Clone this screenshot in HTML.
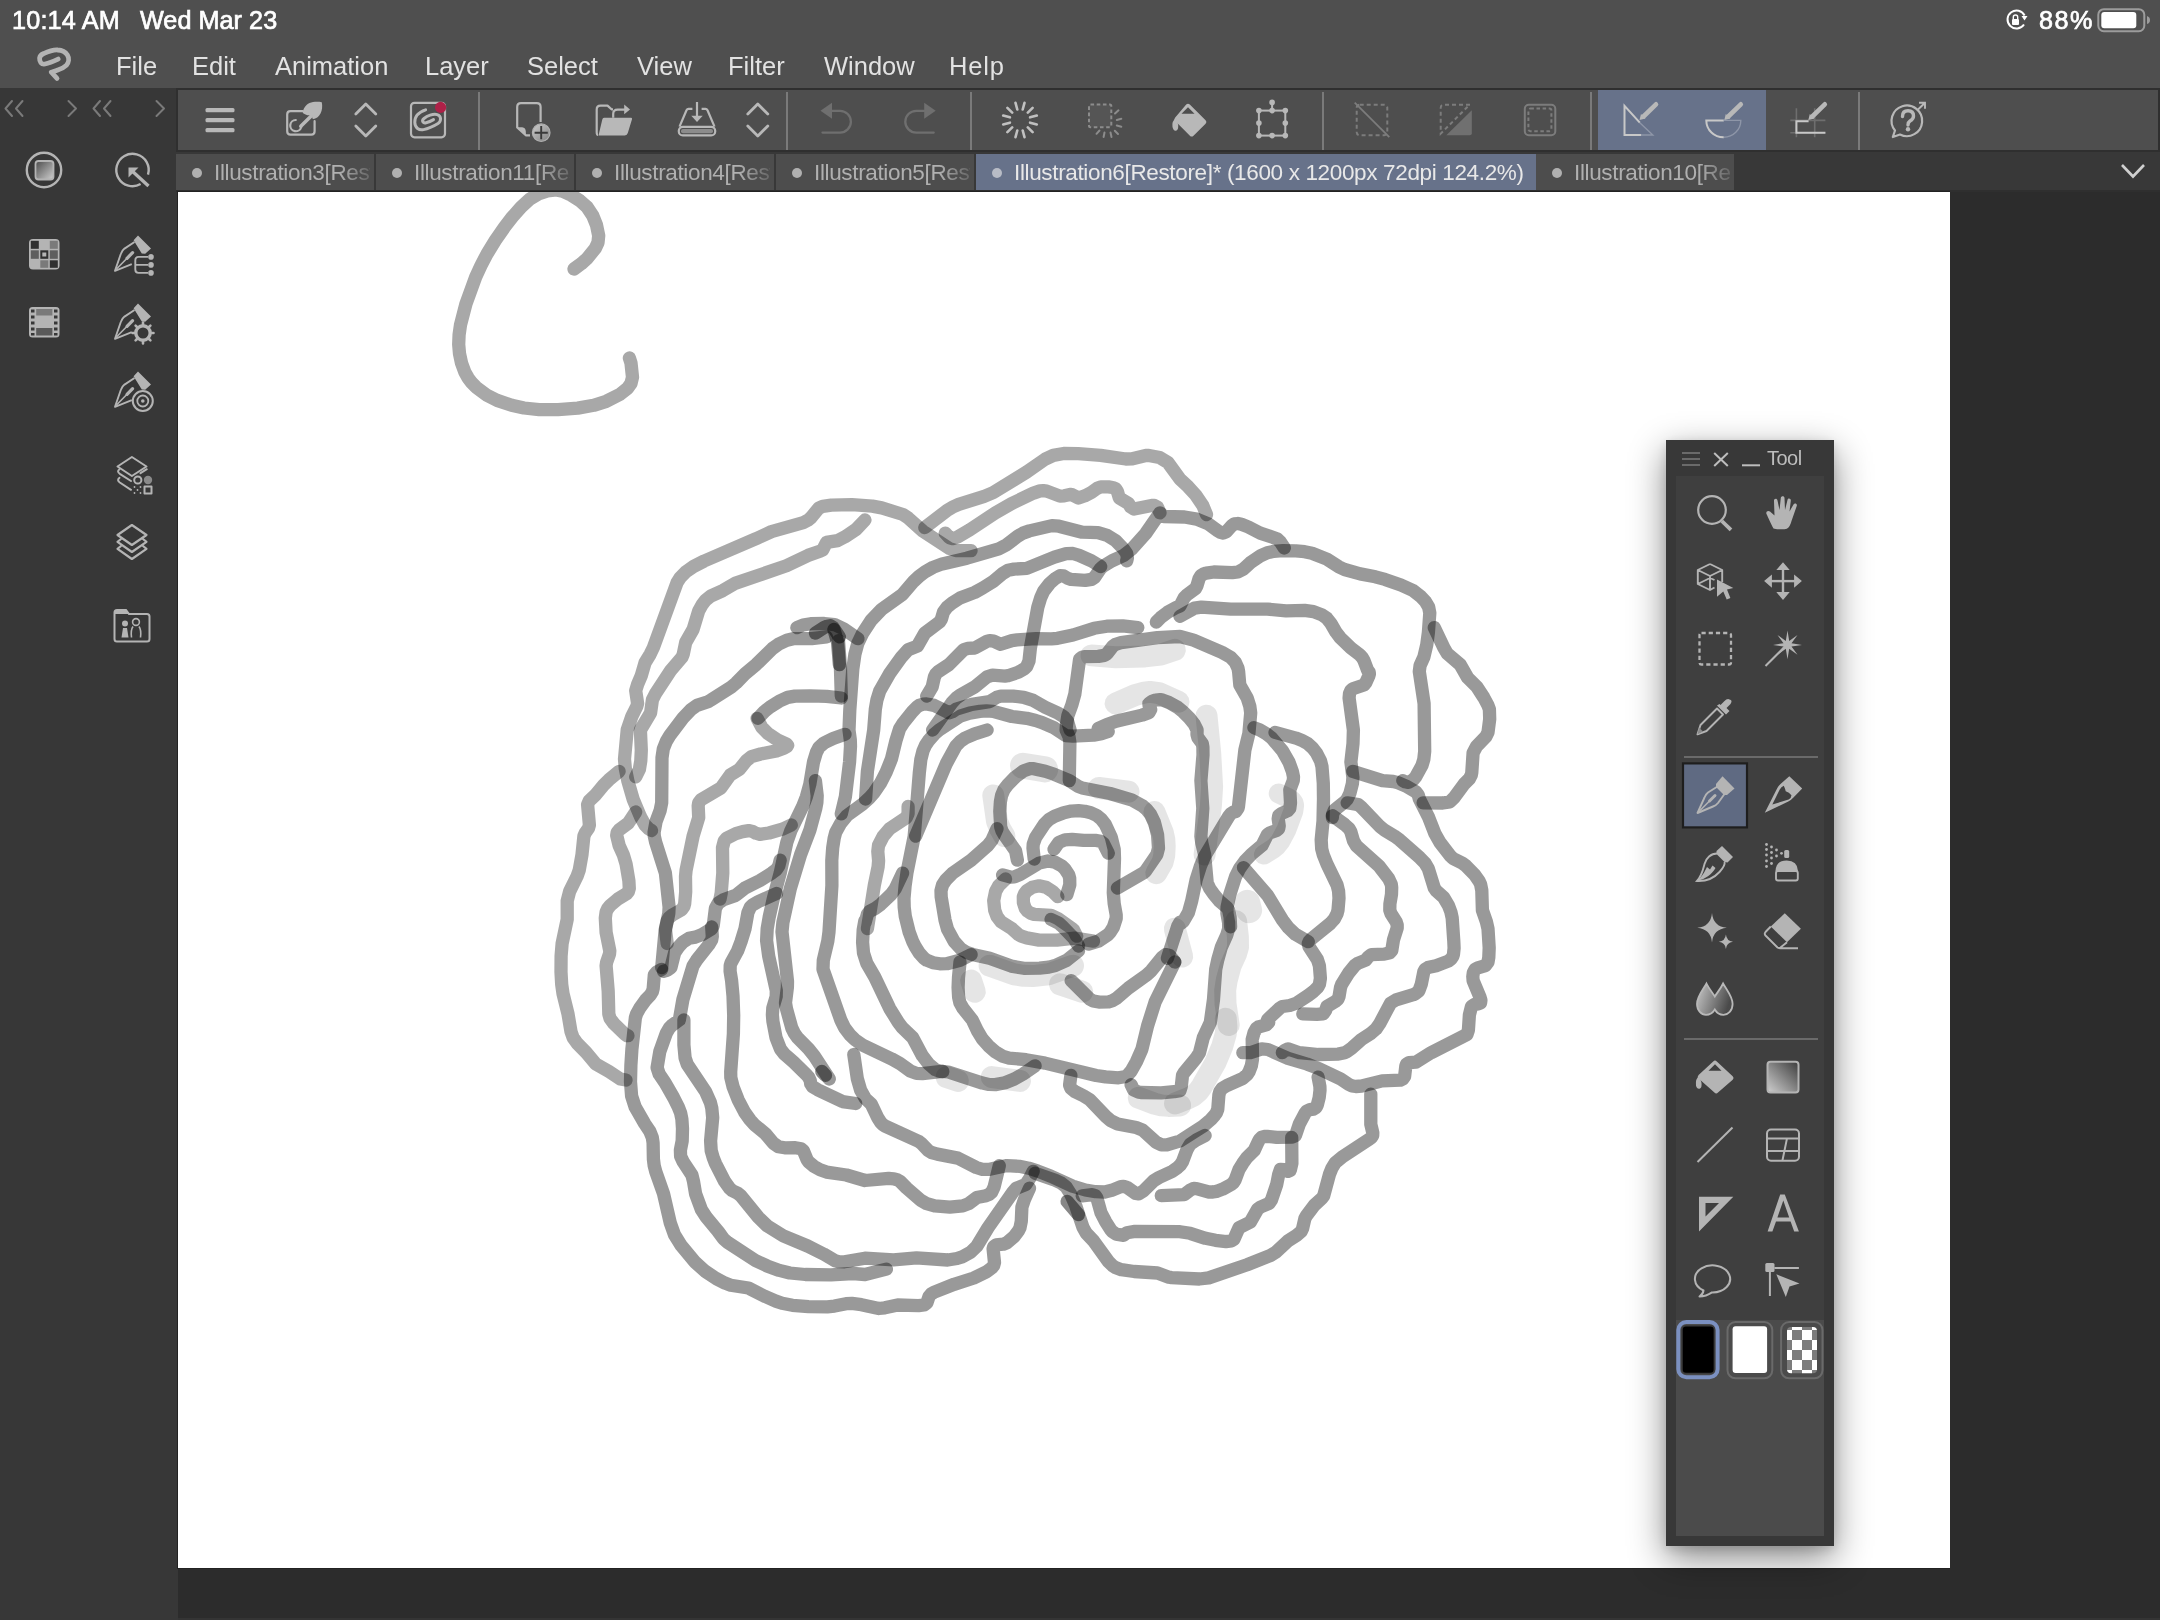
<!DOCTYPE html>
<html><head><meta charset="utf-8">
<style>
*{margin:0;padding:0;box-sizing:border-box}
html,body{width:2160px;height:1620px;overflow:hidden;background:#2c2c2c;font-family:"Liberation Sans",sans-serif}
.a{position:absolute}
.st,.menu,.tab .t,#ptitle{will-change:transform}
#top{left:0;top:0;width:2160px;height:88px;background:#4f4f4f}
.st{top:6px;color:#fff;font-size:25.2px;white-space:pre;-webkit-text-stroke:0.7px #fff;letter-spacing:0.2px}
.menu{top:51.5px;color:#e2e2e2;font-size:25.5px}
#side{left:0;top:88px;width:178px;height:1532px;background:#373737}
#tbwrap{left:176px;top:88px;width:1984px;height:104px;background:#2f2f2f}
#toolbar{left:178px;top:90px;width:1980px;height:60px;background:#4e4e4e}
#hl{left:1598px;top:90px;width:168px;height:60px;background:#67728a}
#tabstrip{left:176px;top:152px;width:1984px;height:38px;background:#383838}
.tab{top:154px;height:36px;width:198px;background:#4d4d4d;overflow:hidden}
.tab .dot{position:absolute;left:16px;top:14px;width:10px;height:10px;border-radius:50%;background:#b0b0b0}
.tab .t{position:absolute;left:37.5px;top:6px;font-size:22.5px;letter-spacing:-0.35px;color:#b0b0b0;white-space:nowrap;width:156px;overflow:hidden;
  -webkit-mask-image:linear-gradient(to right,#000 80%,rgba(0,0,0,0.25) 100%)}
.tab.act{background:#67728a;width:560px}
.tab.act .t{color:#e8e8e8;-webkit-mask-image:none;width:520px}
.tab.act .dot{background:#b8bcc6}
#canvas{left:178px;top:192px;width:1772px;height:1376px;background:#fff}
#cvline{left:177px;top:191px;width:1773px;height:1378px;background:#222}
#bstrip{left:178px;top:1618px;width:1982px;height:2px;background:#343434}
#panel{left:1666px;top:440px;width:168px;height:1106px;background:#383838;box-shadow:0 12px 34px rgba(0,0,0,0.48),0 3px 10px rgba(0,0,0,0.12)}
#pinner{left:1676px;top:476px;width:148px;height:844px;background:#3f3f3f}
#pcolor{left:1676px;top:1320px;width:148px;height:216px;background:#4b4b4b}
#ptitle{left:1766.5px;top:447px;color:#bdbdbd;font-size:20px;letter-spacing:-0.5px}
svg.ov{position:absolute;left:0;top:0}
</style></head><body>
<div id="top" class="a"></div>
<div class="a st" style="left:11.5px;letter-spacing:0.2px">10:14 AM</div>
<div class="a st" style="left:140px;letter-spacing:0.05px">Wed Mar 23</div>
<div class="a st" style="left:2038.5px;letter-spacing:1.5px">88%</div>
<div class="a menu" style="left:115.5px">File</div>
<div class="a menu" style="left:191.5px">Edit</div>
<div class="a menu" style="left:274.5px">Animation</div>
<div class="a menu" style="left:425px">Layer</div>
<div class="a menu" style="left:527px">Select</div>
<div class="a menu" style="left:637px">View</div>
<div class="a menu" style="left:727.5px">Filter</div>
<div class="a menu" style="left:823.5px">Window</div>
<div class="a menu" style="left:949px;letter-spacing:0.8px">Help</div>

<div id="side" class="a"></div>
<div id="tbwrap" class="a"></div>
<div id="toolbar" class="a"></div>
<div id="hl" class="a"></div>
<div id="tabstrip" class="a"></div>
<div class="a tab" style="left:176px"><div class="dot"></div><div class="t">Illustration3[Restore]</div></div>
<div class="a tab" style="left:376px"><div class="dot"></div><div class="t">Illustration11[Restore]</div></div>
<div class="a tab" style="left:576px"><div class="dot"></div><div class="t">Illustration4[Restore]</div></div>
<div class="a tab" style="left:776px"><div class="dot"></div><div class="t">Illustration5[Restore]</div></div>
<div class="a tab act" style="left:976px"><div class="dot"></div><div class="t">Illustration6[Restore]* (1600 x 1200px 72dpi 124.2%)</div></div>
<div class="a tab" style="left:1536px"><div class="dot"></div><div class="t">Illustration10[Restore]</div></div>

<div id="cvline" class="a"></div>
<div id="bstrip" class="a"></div>
<div id="canvas" class="a"></div>
<svg width="2160" height="1620" viewBox="0 0 2160 1620" style="left:0;top:0;position:absolute">
<defs><clipPath id="cv"><rect x="178" y="192" width="1772" height="1376"/></clipPath></defs>
<g clip-path="url(#cv)" fill="none" stroke-linecap="round" stroke-linejoin="round">
<path d="M574.0,269.0 581.3,263.7 587.0,258.6 595.3,248.3 598.0,242.6 598.7,235.7 596.5,225.0 592.8,215.7 587.0,207.0 579.8,200.6 571.5,195.3 562.7,191.2 556.5,189.9 547.4,190.9 538.2,194.0 529.8,199.2 521.1,207.1 512.2,217.2 504.6,227.0 495.4,240.3 487.0,254.0 481.0,265.5 475.7,277.0 465.9,304.0 460.5,324.9 459.1,334.8 458.7,344.5 459.5,353.6 461.5,363.0 464.9,372.3 468.1,377.9 471.9,382.9 476.1,387.2 486.2,394.8 497.1,400.4 511.6,405.3 524.0,408.0 539.1,409.6 558.0,409.6 577.8,408.1 593.7,405.3 606.3,401.3 619.9,394.4 627.6,388.3 631.0,383.4 632.5,377.2 631.0,363.0 629.4,358.0" stroke="#a8a8a8" stroke-width="13.3"/>
<path d="M1206.5,715.7 1210.2,752.8 1212.1,786.7 1210.9,805.7 1204.6,854.6" stroke="#000" stroke-opacity="0.1" stroke-width="22"/>
<path d="M1278.7,793.5 1288.2,798.0 1291.5,800.2 1293.5,802.8 1294.1,805.3 1293.3,811.2 1286.4,829.8 1280.3,841.2 1276.3,846.1 1273.5,848.5 1263.9,854.6" stroke="#000" stroke-opacity="0.1" stroke-width="20"/>
<path d="M1247.2,902.8 1249.1,910.2" stroke="#000" stroke-opacity="0.1" stroke-width="26"/>
<path d="M1236.1,921.3 1237.9,936.9 1238.0,947.2 1236.1,953.6 1230.6,965.7 1226.7,980.4 1225.2,990.2 1225.5,1003.7 1228.7,1025.0" stroke="#000" stroke-opacity="0.1" stroke-width="22"/>
<path d="M1225.8,1018.8 1226.4,1026.5 1225.8,1033.8 1222.2,1046.5 1215.4,1062.6 1201.9,1086.3 1198.1,1091.7 1193.1,1095.9 1186.4,1099.1 1175.0,1103.5" stroke="#000" stroke-opacity="0.1" stroke-width="22"/>
<path d="M1091.5,655.4 1115.6,657.2 1145.0,656.4 1160.7,654.6 1174.8,649.8" stroke="#000" stroke-opacity="0.1" stroke-width="22"/>
<path d="M1115.6,703.5 1135.0,695.1 1144.1,692.7 1150.0,691.9 1159.0,693.1 1178.5,701.7" stroke="#000" stroke-opacity="0.1" stroke-width="22"/>
<path d="M1154.4,812.0 1162.9,833.0 1164.3,839.4 1164.7,846.2 1164.2,855.6 1162.6,862.0 1156.3,873.1" stroke="#000" stroke-opacity="0.1" stroke-width="22"/>
<path d="M1023.0,765.7 1045.2,769.4" stroke="#000" stroke-opacity="0.1" stroke-width="26"/>
<path d="M1098.9,788.0 1128.5,791.7" stroke="#000" stroke-opacity="0.1" stroke-width="22"/>
<path d="M989.6,965.7 1014.2,974.3 1023.6,975.8 1032.8,976.1 1048.4,974.3 1073.0,965.7" stroke="#000" stroke-opacity="0.1" stroke-width="22"/>
<path d="M1060.0,984.3 1082.2,991.7" stroke="#000" stroke-opacity="0.1" stroke-width="22"/>
<path d="M1174.8,928.7 1182.2,956.5" stroke="#000" stroke-opacity="0.1" stroke-width="22"/>
<path d="M971.1,980.6 974.8,991.7" stroke="#000" stroke-opacity="0.1" stroke-width="22"/>
<path d="M993.3,795.4 997.0,821.3 1000.1,828.7 1004.4,836.1" stroke="#000" stroke-opacity="0.1" stroke-width="22"/>
<path d="M1138.7,1097.8 1154.4,1103.6 1161.3,1105.4 1168.5,1105.9 1180.1,1105.4" stroke="#000" stroke-opacity="0.1" stroke-width="22"/>
<path d="M946.6,1077.1 957.9,1080.9" stroke="#000" stroke-opacity="0.1" stroke-width="22"/>
<path d="M991.8,1077.1 1020.0,1080.9" stroke="#000" stroke-opacity="0.1" stroke-width="22"/>
<path d="M971.1,550.7 955.7,550.5 949.4,548.5 923.0,531.3 908.3,518.1 903.0,514.5 881.7,507.9 872.3,506.1 852.0,504.6 831.3,505.1 822.8,506.3 818.9,508.1 810.7,517.9 808.0,520.2 803.3,522.6 771.4,531.6 756.1,538.7 704.2,561.0 693.5,566.5 685.8,571.9 680.2,577.6 677.1,582.5 653.4,647.5 650.2,654.2 645.0,662.8 641.3,675.7 637.5,684.7 635.7,690.6 637.6,703.5 636.7,706.6 631.8,716.5 627.2,730.0 624.5,759.0 625.3,768.4 627.9,781.1 633.2,799.4 640.6,817.0 645.0,825.0 648.7,828.7 651.5,830.6" stroke="#000" stroke-opacity="0.34" stroke-width="13.3"/>
<path d="M865.0,520.0 856.1,529.4 845.2,536.7 837.6,540.6 826.5,542.4 822.8,549.8 820.6,551.0 808.0,555.4 786.4,565.8 735.7,583.1 722.8,590.6 710.6,596.1 705.7,600.1 701.9,605.1 698.7,610.9 693.1,629.4 685.7,642.4 683.2,654.3 682.0,657.2 670.9,670.2 655.5,693.6 652.4,699.8 650.6,712.8 640.4,730.0 641.3,750.1 640.8,760.7 639.4,769.4 635.7,776.9" stroke="#000" stroke-opacity="0.34" stroke-width="13.3"/>
<path d="M796.9,627.6 803.0,625.0 810.7,623.7 824.3,623.5 834.5,624.6 843.9,629.1 858.0,638.7" stroke="#000" stroke-opacity="0.40" stroke-width="13.3"/>
<path d="M815.4,633.1 823.9,627.7 827.3,626.2 830.2,625.7 833.1,627.5 839.4,636.9" stroke="#000" stroke-opacity="0.47" stroke-width="13.3"/>
<path d="M833.9,629.4 837.6,642.4 839.4,664.6" stroke="#000" stroke-opacity="0.47" stroke-width="13.3"/>
<path d="M838.5,640.6 840.4,666.5 841.3,696.1" stroke="#000" stroke-opacity="0.40" stroke-width="13.3"/>
<path d="M1126.7,560.9 1127.4,558.0 1126.7,553.5 1123.2,548.5 1115.6,540.6 1107.1,535.4 1098.0,532.7 1082.2,532.2 1058.9,526.2 1051.9,525.6 1029.4,530.9 1023.0,533.1 1017.3,536.5 1006.9,544.6 998.8,548.8 966.9,558.2 942.2,563.9 932.9,567.4 924.8,572.0 919.0,576.3 913.7,581.3 902.6,594.3 881.6,609.3 871.1,620.3 862.6,633.3 857.7,643.7 854.9,654.4 852.8,669.1 849.8,709.9 849.0,730.0 850.3,739.9 850.5,746.2 849.6,761.7 845.4,796.6 841.3,813.9" stroke="#000" stroke-opacity="0.40" stroke-width="13.3"/>
<path d="M826.5,636.9 811.7,638.7 793.1,638.7 786.8,640.3 778.3,644.3 772.5,648.5 756.1,664.6 745.0,673.9 736.1,683.0 731.2,687.1 710.7,700.1 708.0,701.7 696.9,705.4 690.6,709.9 683.0,718.1 669.8,735.6 666.5,740.9 663.3,748.9 662.0,757.7 661.7,802.8 660.1,810.7 656.1,821.3 654.1,832.2 654.3,836.1 655.6,842.0 665.4,873.1 669.1,907.1 668.8,913.3 665.0,931.8 661.7,967.6" stroke="#000" stroke-opacity="0.40" stroke-width="13.3"/>
<path d="M841.3,698.0 826.6,696.3 810.3,695.8 795.0,696.1 787.7,697.4 779.1,701.3 769.9,707.1 764.3,711.6 758.0,718.3" stroke="#000" stroke-opacity="0.40" stroke-width="13.3"/>
<path d="M757.1,718.3 762.0,727.6 767.9,733.4 777.2,739.8 786.5,744.1 787.6,745.4 786.6,746.8 783.9,748.3 776.5,750.9 760.6,754.0 751.4,756.6 746.4,760.7 739.4,769.4 730.2,775.0 720.9,788.0 701.0,799.8 698.7,802.8 698.2,805.9 698.7,817.6 693.1,836.1 686.1,870.1 685.5,876.3 685.7,891.7 684.7,903.5 683.9,906.5 681.6,909.8 671.9,915.3 669.1,917.6 667.2,920.7 665.4,928.7 667.2,943.5" stroke="#000" stroke-opacity="0.34" stroke-width="13.3"/>
<path d="M924.8,527.6 946.7,510.7 952.2,507.3 958.7,504.4 984.2,496.3 993.1,492.7 1026.7,472.0 1045.2,459.1 1053.3,455.4 1063.7,453.5 1078.3,453.7 1100.7,455.4 1125.8,459.0 1132.4,458.8 1145.8,455.5 1148.9,455.4 1159.6,457.6 1167.9,462.5 1180.0,479.2 1188.1,486.7 1196.0,495.4 1202.8,505.4 1206.5,514.6" stroke="#000" stroke-opacity="0.34" stroke-width="13.3"/>
<path d="M945.2,533.1 949.3,537.6 952.6,538.7 957.6,537.0 969.9,529.8 995.2,513.0 1011.3,503.7 1033.5,493.1 1040.0,490.9 1043.3,490.6 1046.8,491.1 1060.0,496.1 1064.3,495.8 1071.1,494.3 1078.5,498.0 1084.9,495.8 1091.5,492.4 1097.4,488.2 1100.7,486.9 1108.5,486.9 1112.5,487.5 1115.6,488.7 1117.4,491.4 1119.3,498.0 1128.5,503.5 1130.6,506.9 1134.1,509.1 1151.7,505.5 1154.4,505.4 1157.6,507.3 1160.0,512.8" stroke="#000" stroke-opacity="0.34" stroke-width="13.3"/>
<path d="M1284.3,548.0 1280.3,541.9 1276.9,538.7 1260.2,533.1 1248.1,526.9 1241.4,524.3 1237.8,523.5 1234.3,523.9 1231.6,525.9 1226.2,531.9 1223.1,533.1 1220.4,532.4 1217.5,530.6 1208.3,523.9 1196.7,519.1 1184.5,517.0 1163.7,516.5 1160.0,512.8 1145.6,533.6 1131.7,549.1 1123.6,555.5 1111.9,560.9 1103.3,566.2 1100.7,568.3 1094.5,577.4 1091.5,579.4 1085.2,580.4 1071.1,579.4 1066.9,577.9 1063.6,575.9 1060.0,575.7 1055.1,578.6 1049.7,583.4 1043.5,591.4 1040.8,597.4 1037.8,607.2 1030.4,648.0 1029.0,661.0 1026.7,666.5 1024.4,668.7 1018.3,672.3 1008.1,675.7 1005.0,676.1 992.5,675.2 987.0,676.9 974.8,686.9 961.2,694.5 956.3,698.0 952.0,702.6 932.6,730.0" stroke="#000" stroke-opacity="0.40" stroke-width="13.3"/>
<path d="M1100.7,566.5 1091.5,560.9 1079.1,555.4 1073.0,553.5 1066.2,553.6 1054.4,557.2 1026.7,568.3 1014.0,569.1 1008.1,570.2 1003.1,573.2 993.3,581.3 982.7,588.0 974.8,592.4 960.0,598.0 952.0,603.1 947.1,607.1 943.4,612.2 941.5,618.9 939.6,622.0 924.8,633.1 917.4,646.1 908.1,649.8 901.6,656.9 889.4,673.9 879.7,691.1 876.9,700.0 875.3,709.4 873.7,730.0 867.4,771.3 865.6,799.1" stroke="#000" stroke-opacity="0.40" stroke-width="13.3"/>
<path d="M1137.8,627.6 1122.8,625.9 1106.9,626.2 1094.1,628.3 1073.0,635.0 1057.5,638.3 1051.4,638.9 1035.9,638.7 1017.1,639.9 1011.9,640.6 1000.7,644.3 993.6,641.2 989.6,640.6 986.8,641.4 974.8,648.0 967.5,648.4 963.7,649.8 948.9,664.6 937.9,671.9 935.9,673.9 934.4,677.0 932.2,686.9 926.7,696.1" stroke="#000" stroke-opacity="0.40" stroke-width="13.3"/>
<path d="M1167.4,958.3 1177.7,926.3 1180.0,922.1 1180.1,923.9 1183.3,921.5 1188.4,912.7 1191.7,900.9 1196.2,879.4 1200.4,866.2 1204.2,857.1 1228.8,816.3 1230.6,813.9 1233.3,812.2 1235.8,811.5 1238.0,808.3 1238.5,806.3 1244.9,749.8 1248.9,733.4 1250.7,712.8 1249.8,706.2 1247.2,698.0 1239.8,685.0 1238.6,671.4 1238.0,668.3 1235.3,662.3 1230.6,657.2 1222.0,652.4 1193.5,640.2 1180.0,636.5 1157.4,637.7 1121.0,642.7 1115.6,644.3 1112.8,646.2 1107.2,653.6 1104.4,655.4 1098.4,656.4 1084.5,656.6 1082.2,657.2 1079.6,659.1 1074.8,694.3 1071.9,704.8 1067.9,715.6 1066.4,725.1 1066.1,730.0 1069.0,736.4 1069.9,742.6 1069.3,780.6" stroke="#000" stroke-opacity="0.40" stroke-width="13.3"/>
<path d="M1156.3,622.0 1160.7,617.6 1167.4,612.4 1175.7,607.7 1180.0,606.1 1184.3,597.6 1186.8,595.0 1195.4,588.7 1197.0,585.6 1199.1,578.5 1200.9,575.7 1203.4,574.1 1206.2,573.1 1213.9,572.0 1232.3,572.7 1238.0,572.0 1243.4,569.1 1250.2,562.8 1260.9,555.6 1267.3,552.7 1273.8,551.3 1282.8,550.7 1295.9,550.9 1304.6,551.7 1312.0,553.2 1326.9,559.1 1338.6,566.7 1344.5,569.5 1360.2,573.9 1375.4,576.8 1385.0,579.4 1400.9,585.0 1413.0,590.5 1420.7,596.5 1425.4,601.5 1428.7,607.2 1429.8,613.0 1428.4,632.4 1426.7,645.1 1423.9,657.0 1420.1,665.4 1419.3,671.5 1424.1,703.5 1424.7,751.2 1423.8,759.4 1422.0,765.4 1415.7,776.9 1413.2,779.7 1408.3,782.4 1405.1,781.8 1402.8,780.6" stroke="#000" stroke-opacity="0.40" stroke-width="13.3"/>
<path d="M1035.1,1065.8 1023.2,1074.0 1014.4,1079.0 1005.1,1082.7 995.3,1084.6 988.9,1084.4 982.5,1083.1 948.3,1072.0 942.0,1071.4 922.3,1073.7 916.5,1073.4 910.3,1071.0 900.1,1063.6 891.7,1058.9 862.4,1044.9 854.8,1039.6 850.1,1035.0 844.4,1027.4 840.8,1020.0 823.0,969.3 823.3,960.2 827.8,941.1 829.0,931.8 831.9,885.5 831.8,860.4 832.7,847.7 834.2,838.1 835.7,832.4 840.9,822.9 847.0,815.5 862.6,804.1 869.0,798.3 874.3,792.3 880.6,783.1 886.2,772.0 891.4,759.1 896.1,739.9 899.6,728.8 903.2,723.1 912.2,711.9 916.9,707.0 919.3,705.4 922.8,704.2 926.6,704.0 934.1,705.4 948.9,712.8 952.4,711.7 956.3,709.1 971.8,704.3 989.6,701.7 997.0,697.1 1000.7,696.1 1013.2,696.1 1023.7,697.3 1033.3,700.4 1045.2,707.2 1057.8,713.1 1063.4,716.4 1067.6,721.3 1070.1,730.0" stroke="#000" stroke-opacity="0.40" stroke-width="13.3"/>
<path d="M971.1,954.6 960.0,960.2 946.8,963.7 939.9,963.8 932.9,962.7 926.7,960.2 924.0,958.3 919.5,953.3 915.6,947.2 912.7,941.5 909.1,931.9 905.3,916.4 904.2,907.2 904.0,898.4 905.1,885.7 907.0,872.4 914.2,836.4 919.3,773.1 920.8,759.7 923.0,750.9 925.5,745.3 928.7,740.5 934.4,734.0 939.1,730.0 960.9,715.8 969.6,713.1 979.8,711.4 986.5,710.9 993.1,711.3 1011.9,716.5 1026.7,718.3 1035.7,720.5 1042.1,722.6 1054.3,727.9 1065.7,735.6 1072.9,736.1 1093.6,735.2 1101.5,733.7 1108.2,731.5 1107.4,730.6 1099.0,729.4 1098.1,728.6 1107.0,724.4 1116.1,721.2 1142.1,715.1 1148.9,712.8 1150.7,709.6 1149.2,706.3 1148.9,703.5 1151.6,701.5 1155.6,700.0 1160.0,699.6 1162.8,700.1 1169.0,702.5 1177.7,707.4 1183.5,712.2 1189.3,718.0 1194.2,724.1 1197.1,730.0 1197.0,734.3 1197.8,737.5 1202.3,743.6 1202.9,747.2 1203.0,755.0 1200.9,780.6 1202.8,808.3 1200.9,836.1 1201.8,843.0 1204.6,854.6 1207.2,882.9 1209.7,888.5 1213.4,893.7 1219.4,900.9 1227.0,907.5 1228.7,910.2 1230.1,917.1 1230.6,926.9" stroke="#000" stroke-opacity="0.40" stroke-width="13.3"/>
<path d="M1180.0,616.3 1194.5,608.1 1201.4,607.1 1230.6,609.1 1267.6,609.1 1286.1,610.9 1304.6,610.4 1313.5,611.6 1322.0,614.9 1326.9,618.3 1330.9,623.3 1336.1,632.3 1340.0,637.4 1350.9,648.0 1359.7,654.7 1362.0,657.2 1363.9,660.4 1367.6,670.2 1369.2,672.2 1369.4,673.9 1368.7,676.3 1365.8,682.6 1363.9,685.0 1352.8,688.7 1350.7,690.8 1349.5,693.6 1349.1,698.0 1353.4,730.0 1353.0,743.5 1350.9,762.0 1352.9,777.5 1352.4,783.7 1349.9,793.4 1347.2,799.1 1344.9,801.8 1334.3,810.2 1332.5,814.6 1332.4,817.6" stroke="#000" stroke-opacity="0.40" stroke-width="13.3"/>
<path d="M1434.3,627.6 1443.8,647.7 1447.2,653.5 1460.2,664.6 1467.6,677.6 1476.9,686.9 1483.8,697.5 1488.0,705.4 1489.4,709.3 1489.7,719.1 1488.0,732.4 1485.9,736.7 1476.5,746.4 1473.1,752.8 1471.8,772.4 1471.3,775.0 1469.4,778.8 1463.9,784.3 1454.5,797.2 1449.8,801.9 1442.8,803.0 1423.1,802.8" stroke="#000" stroke-opacity="0.40" stroke-width="13.3"/>
<path d="M1253.9,727.6 1259.9,730.0 1266.3,733.8 1271.7,738.0 1282.5,750.8 1289.1,762.4 1292.4,771.5 1293.5,776.9 1293.3,780.5 1289.8,789.8 1290.5,802.8 1289.8,808.3 1287.6,810.8 1281.0,813.8 1278.7,815.7 1278.2,818.8 1279.2,825.9 1278.7,828.7 1276.6,830.5 1270.2,832.7 1267.6,834.3 1262.0,845.4 1251.7,854.0 1245.1,860.9 1239.6,868.5 1235.5,876.8 1229.7,894.9 1227.1,907.1 1226.9,913.3 1228.6,922.5 1228.7,928.7 1226.9,934.7 1221.3,947.2 1217.8,959.6 1215.7,969.4 1213.5,999.5 1210.3,1022.5 1203.3,1037.6 1199.5,1052.7 1196.0,1058.2 1184.0,1072.8 1182.5,1075.4 1181.3,1086.3 1180.0,1090.6 1174.1,1091.7 1161.2,1092.9 1140.8,1092.5 1138.7,1092.2 1133.6,1090.0 1131.1,1084.7" stroke="#000" stroke-opacity="0.40" stroke-width="13.3"/>
<path d="M619.1,771.3 608.8,779.9 603.7,784.9 595.0,795.4 589.2,800.9 587.6,804.6 589.4,825.0 588.5,828.3 585.2,833.0 583.9,836.1 582.0,854.6 579.2,870.3 577.0,876.4 569.7,891.2 567.2,900.9 567.2,919.4 562.1,943.7 561.1,956.0 561.0,972.1 561.7,984.3 563.0,993.7 568.0,1013.9 571.0,1031.6 573.1,1037.6 577.1,1043.3 586.4,1052.7 595.8,1064.0 609.0,1071.5 620.3,1079.0 626.0,1080.0" stroke="#000" stroke-opacity="0.34" stroke-width="13.3"/>
<path d="M635.7,812.0 628.3,823.1 619.2,829.9 617.2,832.4 616.7,835.4 619.1,845.4 623.3,854.7 626.1,864.2 628.9,880.9 629.3,888.4 628.3,891.7 626.5,893.8 617.9,899.0 609.9,905.8 607.7,908.6 606.1,912.0 605.3,918.2 606.1,932.4 609.8,950.9 609.5,954.0 606.6,962.4 606.1,965.7 608.2,991.1 608.8,1013.9 610.0,1018.3 613.8,1023.5 624.4,1033.8 627.1,1035.7 628.0,1035.7" stroke="#000" stroke-opacity="0.34" stroke-width="13.3"/>
<path d="M661.7,969.4 656.6,972.1 654.3,975.0 653.2,988.5 652.4,991.7 650.6,994.7 645.7,999.9 639.9,1007.9 636.6,1013.9 635.4,1017.6 631.9,1049.3 630.9,1065.2 630.5,1081.7 631.6,1096.0 635.1,1106.9 644.7,1123.6 649.8,1131.2 652.3,1137.4 653.1,1142.9 653.4,1159.1 654.2,1165.6 655.8,1171.7 663.6,1193.9 670.3,1223.0 674.5,1234.7 681.0,1245.3 694.9,1262.0 705.0,1271.1 716.1,1278.5 724.9,1283.1 730.7,1285.2 748.4,1288.0 764.3,1296.1 775.8,1301.1 782.1,1303.3 792.4,1305.3 808.5,1306.6 827.4,1306.8 834.5,1306.1 846.1,1303.7 851.9,1303.4 861.4,1304.7 878.8,1308.5 884.8,1307.8 897.7,1305.0 918.6,1305.7 924.0,1305.0 926.9,1302.9 929.0,1296.6 931.5,1293.7 933.7,1292.4 954.1,1284.3 973.8,1278.0 986.6,1271.8 991.9,1267.8 993.7,1265.4 994.5,1262.5 993.1,1248.9 993.7,1246.6 996.1,1244.9 1003.3,1244.2 1006.9,1242.8 1014.2,1236.4 1018.5,1230.7 1020.0,1227.8 1021.3,1221.2 1021.9,1207.1 1024.3,1199.9 1029.5,1188.2" stroke="#000" stroke-opacity="0.40" stroke-width="13.3"/>
<path d="M845.0,734.3 833.1,738.5 824.1,742.9 819.1,747.2 816.4,752.3 813.5,762.0 809.8,784.3 806.3,797.0 802.9,805.9 791.0,830.3 786.8,842.4 780.2,873.1 773.5,897.9 769.2,917.0 767.2,928.7 766.6,940.7 768.7,956.1 776.3,990.5 776.2,996.5 772.8,1008.2 772.4,1014.8 772.9,1021.3 776.0,1037.6 780.4,1048.9 784.3,1054.1 793.5,1062.1 807.0,1075.3 808.6,1077.1 810.3,1080.8 810.7,1083.8 812.4,1086.5 817.6,1089.7 842.5,1101.6 855.7,1103.5" stroke="#000" stroke-opacity="0.40" stroke-width="13.3"/>
<path d="M815.4,780.6 817.2,795.8 816.9,802.2 815.8,808.3 810.0,829.9 800.6,854.6 790.3,888.6 782.9,922.5 782.0,931.8 787.5,981.2 787.4,987.3 785.5,1002.8 786.5,1008.8 791.8,1028.0 794.3,1033.2 797.5,1037.6 808.6,1048.9 814.4,1056.2 829.3,1079.0" stroke="#000" stroke-opacity="0.40" stroke-width="13.3"/>
<path d="M791.3,825.0 782.3,829.2 769.0,833.0 759.8,834.3 755.8,833.2 752.7,831.4 748.7,830.6 742.7,831.6 735.8,833.6 726.6,838.2 724.3,840.8 722.5,847.7 722.8,873.1 721.2,893.2 720.0,899.1" stroke="#000" stroke-opacity="0.34" stroke-width="13.3"/>
<path d="M780.2,860.2 778.8,865.9 776.5,869.4 771.8,873.1 759.8,880.6 745.0,888.0 735.7,895.4 723.4,899.7 718.3,903.1 715.4,908.3 713.3,925.3 711.7,928.7 702.2,934.5 695.4,937.1 688.9,938.3 683.3,941.8 678.5,947.0 674.6,952.8 670.9,967.6 667.0,970.4 663.5,971.3" stroke="#000" stroke-opacity="0.40" stroke-width="13.3"/>
<path d="M776.5,893.5 758.5,901.5 752.5,905.0 750.4,907.0 747.9,912.6 745.0,928.7 741.0,941.7 737.6,950.9 731.1,962.7 730.2,965.7 730.1,971.3 731.6,980.6 733.0,995.8 733.7,1015.2 733.4,1033.8 730.7,1071.7 730.8,1077.5 733.1,1086.8 738.1,1099.7 744.4,1111.8 750.1,1119.9 754.6,1124.9 765.3,1133.6 773.4,1143.2 778.5,1146.8 784.7,1147.8 795.4,1147.7 801.1,1148.7 803.4,1150.7 806.9,1159.3 808.6,1161.9 813.7,1166.2 820.1,1169.8 826.5,1172.1 846.3,1175.0 865.0,1180.5 888.7,1178.4 893.9,1178.8 897.5,1179.9 900.2,1181.5 906.6,1188.0 920.7,1200.2 925.9,1203.3 934.6,1205.9 949.9,1207.1 962.8,1205.9 968.7,1203.6 976.7,1197.6 986.1,1195.7 989.2,1194.4 991.8,1192.0 994.1,1187.0 999.3,1165.6" stroke="#000" stroke-opacity="0.40" stroke-width="13.3"/>
<path d="M711.7,926.9 712.3,936.3 711.7,939.8 708.6,945.0 696.6,960.2 693.1,965.7 682.9,999.5 679.3,1020.0 671.9,1025.4 669.2,1028.2 666.3,1033.3 659.8,1051.5 657.1,1067.6 659.2,1074.1 665.1,1082.8 673.6,1097.6 678.3,1107.0 680.6,1112.9 681.9,1119.3 682.5,1128.7 682.2,1140.9 680.4,1150.1 680.6,1156.2 683.1,1161.6 691.9,1175.0 693.5,1181.3 695.6,1193.9 701.4,1209.6 706.6,1217.6 718.2,1231.5 723.4,1238.7 728.0,1242.7 755.4,1260.5 767.0,1265.9 779.3,1270.4 789.8,1273.0 805.3,1274.5 831.0,1274.8 852.9,1273.5 865.0,1274.5 886.4,1269.1" stroke="#000" stroke-opacity="0.40" stroke-width="13.3"/>
<path d="M902.6,873.1 895.3,888.6 891.1,894.4 880.8,904.3 875.3,908.3 869.6,911.4 867.4,914.3 865.0,922.9 864.8,921.0 863.2,929.9 862.6,942.2 863.5,953.0 866.7,963.1 874.8,977.1 889.7,1008.4 898.4,1022.5 902.2,1027.5 912.7,1037.6 922.4,1055.8 928.7,1064.0 935.3,1069.6 939.8,1071.3 942.8,1071.5" stroke="#000" stroke-opacity="0.40" stroke-width="13.3"/>
<path d="M987.1,730.0 974.7,733.8 965.2,738.0 960.0,741.7 955.7,746.3 946.4,763.5 915.6,836.1" stroke="#000" stroke-opacity="0.40" stroke-width="13.3"/>
<path d="M908.1,806.5 908.1,813.5 906.3,817.6 889.6,828.7 883.0,836.6 878.5,845.4 877.8,851.4 878.6,860.8 878.1,866.9 874.3,885.4 867.4,928.7" stroke="#000" stroke-opacity="0.34" stroke-width="13.3"/>
<path d="M1017.4,860.2 1015.6,850.9 1004.0,834.4 1002.1,831.2 1000.7,826.9 999.8,811.3 1000.4,801.7 1001.6,795.3 1004.0,789.6 1008.1,784.3 1015.3,777.0 1023.9,770.7 1029.7,768.7 1032.6,768.6 1045.2,771.3 1054.3,774.3 1069.3,780.6 1078.2,786.3 1082.2,788.0 1110.0,793.5 1131.5,799.8 1142.5,805.9 1147.0,809.8 1150.6,814.4 1154.5,822.5 1157.6,834.9 1158.5,848.1 1156.9,854.5 1145.6,871.0 1143.3,873.1 1117.4,888.0" stroke="#000" stroke-opacity="0.40" stroke-width="13.3"/>
<path d="M997.0,828.7 991.9,840.2 987.8,845.5 971.1,860.2 952.6,873.1 945.8,880.0 942.5,885.0 941.0,890.7 941.2,897.0 945.0,919.9 947.6,929.4 954.0,941.2 960.9,948.9 966.4,952.4 972.5,954.4 989.6,958.3 1011.2,966.1 1023.8,968.3 1039.6,968.1 1048.9,967.1 1055.3,965.5 1066.6,960.4 1078.5,950.9" stroke="#000" stroke-opacity="0.40" stroke-width="13.3"/>
<path d="M1071.1,980.6 1090.0,999.3 1093.3,1000.9 1099.0,1002.1 1108.8,1001.8 1111.9,1000.9 1116.6,998.2 1128.5,988.0 1146.5,975.2 1151.2,970.8 1162.0,957.5 1165.6,954.6 1169.5,955.5 1174.8,962.0" stroke="#000" stroke-opacity="0.40" stroke-width="13.3"/>
<path d="M1174.8,962.0 1155.2,1001.7 1147.6,1025.8 1141.9,1049.3 1136.4,1061.8 1131.2,1071.0 1127.4,1075.3 1124.6,1076.8 1118.5,1077.8 1105.6,1076.9 1096.2,1075.5 1045.0,1063.1 1026.0,1059.7 1009.1,1058.1 1003.1,1056.4 995.2,1051.8 988.3,1045.7 982.3,1038.9 977.7,1031.3 972.3,1020.0 962.9,1008.1 959.9,1002.8 958.6,997.0 958.1,987.6 958.5,977.5 960.0,962.0" stroke="#000" stroke-opacity="0.40" stroke-width="13.3"/>
<path d="M1275.0,732.4 1295.9,738.1 1302.1,740.4 1307.6,743.6 1312.6,748.0 1316.5,753.0 1320.6,761.1 1322.0,766.7 1323.3,783.2 1323.5,798.7 1323.0,821.1 1321.2,840.0 1321.7,848.9 1323.3,854.9 1326.9,863.9 1337.1,885.0 1338.6,891.3 1339.0,898.2 1338.0,910.2 1337.1,913.7 1334.4,918.8 1330.3,923.5 1311.4,938.9 1309.3,941.2 1308.3,943.5 1309.0,946.7 1317.4,959.5 1319.4,965.7 1320.4,978.3 1319.4,984.3 1318.0,987.0 1313.6,991.4 1308.3,995.4 1296.3,1003.3 1289.7,1005.5 1282.4,1006.5 1280.0,1007.9 1268.1,1019.0 1267.5,1020.0 1268.4,1020.8 1268.7,1022.5 1266.2,1024.9 1258.3,1027.0 1256.5,1028.2 1254.0,1032.8 1252.2,1039.5 1252.5,1059.1 1251.4,1065.6 1249.1,1071.7 1247.3,1074.5 1242.4,1078.7 1226.7,1085.6 1222.1,1088.4 1219.8,1091.6 1218.9,1095.0 1217.8,1109.1 1216.4,1112.9 1214.9,1115.0 1210.9,1119.5 1203.2,1126.1 1180.0,1141.0 1166.9,1144.9 1161.3,1144.8 1156.1,1142.2 1142.4,1129.9 1136.2,1127.6 1117.6,1123.9 1110.4,1120.4 1106.0,1116.7 1089.7,1099.7 1083.6,1095.9 1074.8,1091.5 1070.9,1088.4 1069.6,1085.0 1070.9,1075.3" stroke="#000" stroke-opacity="0.40" stroke-width="13.3"/>
<path d="M1243.5,867.6 1267.6,895.4 1282.5,920.0 1288.2,927.5 1295.4,934.3 1308.3,941.7" stroke="#000" stroke-opacity="0.40" stroke-width="13.3"/>
<path d="M1332.4,815.7 1344.6,824.5 1349.1,828.7 1350.8,831.6 1353.5,840.9 1356.6,846.1 1378.7,865.7 1388.5,878.3 1391.3,884.3 1391.7,887.6 1391.5,894.4 1389.9,904.0 1389.8,910.2 1390.9,913.4 1396.3,922.1 1397.2,925.0 1397.2,928.0 1393.5,939.8 1391.8,950.4 1389.8,952.8 1384.3,954.1 1371.3,954.6 1368.1,957.2 1365.7,960.2 1357.7,963.4 1354.6,965.7 1348.7,973.0 1341.7,984.3 1340.5,987.6 1339.0,996.6 1338.0,999.1 1335.5,1001.4 1326.9,1006.5 1325.6,1010.6 1323.1,1013.9 1316.8,1014.4 1302.8,1013.9" stroke="#000" stroke-opacity="0.40" stroke-width="13.3"/>
<path d="M1347.2,802.8 1358.3,804.6 1361.3,807.1 1379.9,826.5 1385.1,830.6 1394.2,835.9 1399.7,839.9 1419.9,857.8 1424.8,862.8 1428.3,868.6 1434.3,888.0 1436.5,891.1 1443.5,897.2 1448.5,905.7 1450.9,912.0 1452.2,918.0 1453.8,941.3 1454.1,948.2 1453.5,954.1 1452.8,956.5 1450.9,959.2 1448.3,961.1 1436.1,965.7 1427.9,967.6 1425.0,969.4 1423.8,971.8 1421.3,984.3 1418.9,990.8 1415.7,993.5 1413.3,994.7 1396.0,999.9 1390.6,1003.1 1379.6,1023.8 1375.9,1029.1 1371.3,1033.1 1361.4,1039.5 1352.1,1047.8 1347.2,1051.4 1344.5,1052.7 1338.4,1054.1 1318.5,1054.5 1299.3,1052.7 1288.0,1048.9 1284.4,1050.5 1282.3,1052.7" stroke="#000" stroke-opacity="0.40" stroke-width="13.3"/>
<path d="M1352.8,771.3 1382.4,780.6 1393.3,781.5 1397.2,782.4 1407.2,786.7 1415.7,791.7 1418.2,794.8 1419.4,799.1 1428.7,817.6 1434.9,833.5 1439.7,842.1 1450.2,855.8 1452.8,858.3 1462.3,863.2 1465.7,865.7 1475.0,875.2 1479.1,881.1 1480.6,884.3 1481.8,890.4 1482.4,910.2 1486.4,921.7 1488.0,928.7 1489.2,947.8 1488.8,957.4 1488.0,962.0 1485.4,965.6 1477.8,967.9 1475.0,969.4 1473.3,972.8 1472.8,976.6 1473.1,980.6 1480.0,997.1 1480.9,1000.2 1480.6,1002.8 1478.1,1003.9 1474.5,1004.4 1471.5,1006.5 1469.4,1014.8 1468.4,1030.1 1466.9,1034.5 1431.1,1052.7 1416.0,1062.1 1409.1,1062.6 1406.6,1064.0 1405.8,1066.3 1404.6,1076.6 1402.8,1079.0 1400.4,1080.1 1382.1,1080.9 1361.7,1086.0 1355.8,1086.5 1352.0,1085.9 1348.9,1084.5 1340.7,1079.0 1319.6,1068.9 1306.8,1064.0 1288.0,1058.3 1267.9,1049.5 1261.8,1048.9 1250.3,1052.7 1242.8,1052.7" stroke="#000" stroke-opacity="0.40" stroke-width="13.3"/>
<path d="M683.9,1020.0 683.9,1044.8 685.1,1057.9 687.2,1064.2 705.6,1091.6 710.4,1102.5 711.8,1108.1 712.7,1117.6 710.6,1140.8 711.2,1150.6 713.1,1157.3 715.5,1163.5 724.5,1181.1 729.5,1188.2 732.3,1190.6 737.7,1193.3 740.8,1195.8 758.3,1217.3 767.2,1225.9 783.3,1235.8 807.6,1246.0 823.7,1254.1 835.1,1260.8 838.7,1261.7 844.5,1261.8 865.0,1258.2 893.5,1259.8 916.5,1257.9 947.7,1260.0 957.0,1258.5 962.9,1256.6 970.6,1252.2 976.8,1246.3 988.0,1227.8 1012.9,1192.1 1016.3,1188.2 1025.7,1184.5 1029.2,1179.2 1033.2,1171.3" stroke="#000" stroke-opacity="0.40" stroke-width="13.3"/>
<path d="M821.8,1071.5 825.5,1075.3" stroke="#000" stroke-opacity="0.47" stroke-width="13.3"/>
<path d="M853.8,1054.5 857.3,1078.6 860.7,1090.3 865.3,1098.5 871.3,1104.1 877.7,1117.6 880.7,1122.3 882.9,1124.6 885.2,1126.1 918.4,1141.2 921.5,1143.5 928.3,1150.6 931.5,1152.5 937.3,1154.1 957.9,1158.1 976.3,1167.5 982.4,1169.4 988.6,1169.4 1006.9,1165.6 1019.3,1166.3 1028.7,1168.2 1037.9,1171.1 1051.0,1176.2 1072.5,1186.1 1085.4,1190.0 1095.6,1191.7 1104.8,1192.0 1111.7,1190.3 1120.8,1186.6 1123.6,1186.3 1126.9,1187.3 1135.7,1193.5 1138.7,1193.9 1143.5,1190.9 1153.7,1180.7 1159.0,1177.5 1172.6,1171.2 1177.9,1167.3 1180.4,1164.9 1182.5,1161.6 1187.0,1149.6 1190.1,1144.2 1196.3,1140.0 1205.1,1135.5" stroke="#000" stroke-opacity="0.40" stroke-width="13.3"/>
<path d="M1035.1,1173.2 1055.2,1180.2 1061.1,1183.0 1065.9,1186.7 1070.8,1194.3 1075.8,1206.0 1083.0,1227.3 1086.2,1233.2 1093.5,1240.9 1108.4,1261.5 1112.3,1265.4 1115.4,1267.5 1121.3,1269.7 1134.2,1271.5 1157.5,1273.0 1168.8,1277.2 1171.6,1277.6 1199.4,1279.0 1208.7,1277.9 1247.1,1264.7 1270.4,1255.5 1275.9,1252.1 1288.0,1240.9 1296.6,1235.4 1301.2,1231.5 1302.6,1228.5 1304.9,1218.4 1306.4,1215.7 1314.3,1205.2 1321.8,1198.4 1323.7,1195.8 1329.5,1174.3 1331.9,1168.2 1335.4,1162.6 1343.3,1156.2 1368.8,1139.5 1371.2,1137.7 1372.7,1135.5 1372.8,1132.7 1370.8,1124.2 1370.8,1094.1" stroke="#000" stroke-opacity="0.40" stroke-width="13.3"/>
<path d="M1067.1,1201.4 1078.4,1214.6" stroke="#000" stroke-opacity="0.47" stroke-width="13.3"/>
<path d="M1082.2,1195.8 1092.3,1194.6 1095.4,1195.8 1096.9,1198.0 1101.0,1212.7 1105.5,1221.4 1110.6,1229.6 1112.3,1231.5 1116.1,1234.2 1123.6,1235.3 1126.8,1232.8 1135.0,1231.4 1180.0,1231.7 1190.1,1233.3 1205.5,1238.3 1215.5,1240.3 1226.0,1241.6 1231.5,1240.9 1233.9,1239.2 1239.0,1227.8 1250.3,1222.1 1257.8,1208.9 1260.6,1207.0 1269.1,1203.3 1271.5,1199.9 1276.7,1184.5 1278.7,1174.4 1280.4,1169.4 1284.2,1169.7 1288.0,1171.3 1290.3,1170.3 1291.9,1163.3 1291.7,1137.4" stroke="#000" stroke-opacity="0.40" stroke-width="13.3"/>
<path d="M1161.3,1195.6 1184.4,1194.6 1190.3,1190.0 1193.8,1188.4 1196.5,1188.6 1208.9,1192.0 1212.9,1192.0 1216.4,1191.4 1222.8,1189.1 1231.2,1184.5 1233.4,1182.6 1235.3,1179.6 1239.0,1169.4 1242.7,1163.4 1246.5,1158.1 1254.1,1150.6 1258.1,1142.0 1259.6,1139.3 1261.6,1137.4 1264.2,1136.5 1267.3,1136.4 1276.7,1137.4 1292.2,1137.2 1295.5,1135.5 1299.3,1124.2 1305.1,1113.1 1306.8,1111.0 1310.0,1109.6 1313.4,1109.1 1316.2,1107.3 1317.4,1104.7 1319.2,1097.5 1320.0,1090.3 1319.9,1086.4 1318.1,1077.1" stroke="#000" stroke-opacity="0.40" stroke-width="13.3"/>
<path d="M1034.2,859.1 1033.0,848.2 1033.2,844.3 1035.5,837.7 1044.5,824.0 1049.0,819.6 1054.6,816.3 1063.8,812.7 1071.2,811.1 1078.6,810.7 1084.8,811.3 1090.8,812.7 1096.3,815.2 1101.2,819.2 1105.3,824.4 1111.3,837.2 1114.2,849.3 1114.5,858.8 1113.3,892.8 1114.2,903.6 1116.2,914.8 1116.2,918.4 1113.4,927.1 1110.2,932.2 1107.7,934.9 1098.4,941.1 1088.5,944.1" stroke="#000" stroke-opacity="0.40" stroke-width="13.3"/>
<path d="M1054.0,849.3 1058.9,842.3 1064.9,839.9 1072.2,839.4 1083.6,840.4 1096.4,840.4 1100.4,841.2 1103.3,843.3 1108.3,853.2" stroke="#000" stroke-opacity="0.40" stroke-width="13.3"/>
<path d="M1002.6,874.9 1011.0,877.1 1014.4,876.9 1020.4,874.4 1039.1,863.1 1048.0,861.0 1054.8,862.1 1061.9,866.0 1064.7,868.7 1068.8,874.9 1069.7,878.2 1069.8,884.8 1066.8,894.7" stroke="#000" stroke-opacity="0.40" stroke-width="13.3"/>
<path d="M1057.9,896.7 1052.4,891.3 1045.8,887.2 1039.1,885.8 1032.3,887.2 1026.7,890.9 1024.6,893.6 1023.3,896.7 1023.4,902.7 1025.3,908.5 1027.5,911.1 1030.4,913.1 1034.2,914.4 1051.0,915.4 1057.8,918.5 1071.8,928.4 1073.7,930.2 1076.7,936.2" stroke="#000" stroke-opacity="0.34" stroke-width="13.3"/>
<path d="M1005.6,878.9 998.7,885.7 995.6,891.4 993.7,900.5 994.7,910.2 997.0,916.6 1000.8,921.6 1011.5,928.3 1018.4,934.5 1021.4,936.2 1026.7,937.9 1039.1,940.1 1056.9,940.1 1074.7,938.1 1093.5,941.1" stroke="#000" stroke-opacity="0.34" stroke-width="13.3"/>
<path d="M1051.0,919.4 1058.9,923.3 1061.6,925.7 1073.7,938.1 1078.6,946.0" stroke="#000" stroke-opacity="0.40" stroke-width="13.3"/>
</g></svg>
<div id="panel" class="a"></div>
<div id="pinner" class="a"></div>
<div id="pcolor" class="a"></div>
<div id="ptitle" class="a">Tool</div>
<svg class="ov" width="2160" height="1620" viewBox="0 0 2160 1620">
<defs>
<linearGradient id="g1" x1="0" y1="0" x2="1" y2="1"><stop offset="0" stop-color="#4a4a4a"/><stop offset="1" stop-color="#d0d0d0"/></linearGradient>
<linearGradient id="g2" x1="1" y1="0" x2="0" y2="1"><stop offset="0" stop-color="#3c3c3c"/><stop offset="1" stop-color="#cfcfcf"/></linearGradient>
<linearGradient id="g3" x1="0" y1="0" x2="1" y2="0.3"><stop offset="0" stop-color="#c8c8c8"/><stop offset="1" stop-color="#4a4a4a"/></linearGradient>
<linearGradient id="g4" x1="0" y1="0" x2="1" y2="1"><stop offset="0" stop-color="#cccccc"/><stop offset="1" stop-color="#808080"/></linearGradient>
<pattern id="chk" x="1782" y="1320" width="20" height="20" patternUnits="userSpaceOnUse">
<rect width="20" height="20" fill="#fff"/><rect width="10" height="10" fill="#7c7c7c"/><rect x="10" y="10" width="10" height="10" fill="#7c7c7c"/></pattern>
<g id="nib">
<path d="M133.6,240.2 L138,235.5 L151,248.4 L145.2,253.8 L141.8,253.6 L141,252.2 Z" fill="#b4b4b4"/>
<path d="M134.5,242 L124.5,248.6 Q121.8,250.8 120.8,254 L115,270.8 L131.8,264.2" fill="none" stroke="#b4b4b4" stroke-width="1.9" stroke-linejoin="round"/>
<path d="M116.5,269 L126.8,258.5" stroke="#b4b4b4" stroke-width="1.6"/>
<path d="M127,258.3 L132.6,252.6" stroke="#b4b4b4" stroke-width="3.2" stroke-linecap="round"/>
</g>
</defs>

<!-- status bar right -->
<g fill="none" stroke="#fff" stroke-width="2">
<path d="M2024.6,15.5 A9,9 0 1 0 2024,24.5"/>
</g>
<path d="M2021.5,16 L2027.5,16 L2024.5,20.5 Z" fill="#fff"/>
<rect x="2012" y="19" width="7" height="6" rx="1" fill="#fff"/>
<path d="M2013.3,19 V17.2 A2.2,2.2 0 0 1 2017.7,17.2 V19" fill="none" stroke="#fff" stroke-width="1.4"/>
<rect x="2098.3" y="9.2" width="46" height="22" rx="5.5" fill="none" stroke="#9c9c9c" stroke-width="2"/>
<rect x="2101.3" y="12" width="35" height="16.2" rx="3" fill="#fff"/>
<path d="M2147,16 Q2150,17 2150,20 Q2150,23 2147,24 Z" fill="#9c9c9c"/>

<!-- CSP logo -->
<g transform="translate(0.8,0.4)" fill="none" stroke="#b4b4b4" stroke-width="4.8" stroke-linecap="round" stroke-linejoin="round">
<path d="M57.3,58.7 C55,59.8 48,62.8 44.2,63.6 C40.5,64.2 38.6,61.5 38.8,57.8 C39.2,55 41,53.8 42.8,53.2 C45,52.2 47.5,51.2 50,50.5 C52.5,49.8 54.5,49.4 57,49.6 C61,49.8 64.5,51.5 66.6,54.6 C68.5,57.8 68.2,62 65.5,65 C63,67.5 59.5,68.8 57,69.6 C54,70.8 52,71.2 50.5,71.8 L56.2,78"/>
</g>

<!-- sidebar nav -->
<g fill="none" stroke="#7a7a7a" stroke-width="2" stroke-linecap="round" stroke-linejoin="round">
<path d="M12,101 L5.5,108.5 L12,116 M22.5,101 L16,108.5 L22.5,116"/>
<path d="M68.5,101 L76,108.5 L68.5,116"/>
<path d="M100,101 L93.5,108.5 L100,116 M110.5,101 L104,108.5 L110.5,116"/>
<path d="M156.5,101 L164,108.5 L156.5,116"/>
</g>
<!-- sidebar icons -->
<g fill="none" stroke="#b4b4b4" stroke-width="2.4">
<circle cx="44" cy="170" r="17.2"/>
<circle cx="132.5" cy="170" r="16.2" stroke-dasharray="89 13" transform="rotate(60 132.5 170)"/>
</g>
<rect x="35.5" y="161" width="18" height="18.5" rx="3" fill="url(#g1)" stroke="#b4b4b4" stroke-width="1.8"/>
<path d="M128.5,167.5 L138.5,167.5 L128.5,177.5 Z" fill="#b4b4b4"/>
<path d="M131,170 L148.5,186" stroke="#b4b4b4" stroke-width="3.3"/>
<!-- grid icon -->
<rect x="29" y="239" width="30.5" height="30.5" rx="4" fill="#b4b4b4"/>
<rect x="30.8" y="240.8" width="8" height="8" fill="#303030"/>
<rect x="49.8" y="240.8" width="8" height="8" fill="#7a7a7a"/>
<rect x="30.8" y="250.3" width="8" height="8.5" fill="#5e5e5e"/>
<rect x="49.8" y="250.3" width="8" height="8.5" fill="#5e5e5e"/>
<rect x="40.3" y="250.3" width="8" height="8.5" fill="#303030"/>
<rect x="42.3" y="252.5" width="4" height="4" fill="#b4b4b4"/>
<rect x="40.3" y="260.3" width="8" height="7.5" fill="#7a7a7a"/>
<rect x="49.8" y="260.3" width="8" height="7.5" fill="#303030"/>
<!-- film icon -->
<rect x="29" y="307" width="30.5" height="30.5" rx="3.5" fill="#b4b4b4"/>
<rect x="36.2" y="309" width="16.2" height="6.5" fill="#7a7a7a"/>
<rect x="36.2" y="328" width="16.2" height="7.5" fill="#5a5a5a"/>
<g fill="#373737">
<rect x="31" y="309.5" width="3.5" height="3"/><rect x="31" y="315.5" width="3.5" height="3"/><rect x="31" y="321.5" width="3.5" height="3"/><rect x="31" y="327.5" width="3.5" height="3"/><rect x="31" y="333" width="3.5" height="2.5"/>
<rect x="54" y="309.5" width="3.5" height="3"/><rect x="54" y="315.5" width="3.5" height="3"/><rect x="54" y="321.5" width="3.5" height="3"/><rect x="54" y="327.5" width="3.5" height="3"/><rect x="54" y="333" width="3.5" height="2.5"/>
</g>
<!-- pen w/ nodes -->
<use href="#nib"/>
<path d="M148,256.9 H138.5 Q135.3,256.9 135.3,260.5 V269.5 Q135.3,272.9 138.5,272.9 H148 M135.3,264.9 H148" fill="none" stroke="#b4b4b4" stroke-width="1.9"/>
<g fill="#b4b4b4"><circle cx="151" cy="256.9" r="2.8"/><circle cx="151" cy="264.9" r="2.8"/><circle cx="151" cy="272.9" r="2.8"/></g>
<!-- pen w/ gear -->
<use href="#nib" y="68"/>
<circle cx="143" cy="333" r="7.2" fill="none" stroke="#b4b4b4" stroke-width="3.4"/>
<g stroke="#b4b4b4" stroke-width="2.6" stroke-linecap="round">
<path d="M143,322.5 V324.5 M143,341.5 V343.5 M132.5,333 H134.5 M151.5,333 H153.5 M135.6,325.6 L137,327 M149,339 L150.4,340.4 M135.6,340.4 L137,339 M149,327 L150.4,325.6"/>
</g>
<!-- pen w/ target -->
<use href="#nib" y="136"/>
<circle cx="142.8" cy="401" r="10" fill="#373737" stroke="#b4b4b4" stroke-width="2"/>
<circle cx="142.8" cy="401" r="5.5" fill="none" stroke="#b4b4b4" stroke-width="1.8"/>
<circle cx="142.8" cy="401" r="1.8" fill="#b4b4b4"/>
<!-- layers w/ shapes -->
<g fill="none" stroke="#b4b4b4" stroke-width="2" stroke-linejoin="round" stroke-linecap="round">
<path d="M131.9,457 L146.5,466.5 L131.9,476 L117.5,466.5 Z"/>
<path d="M119.5,469.2 Q116.5,471.5 119.8,473.8 L131,481"/>
<path d="M119.5,477.8 Q116.5,480.2 119.8,482.5 L131,489.8"/>
<path d="M146.8,469.2 L140.5,473.2"/>
<circle cx="137.8" cy="480" r="3.6"/>
<rect x="144.5" y="486.5" width="7" height="7"/>
</g>
<circle cx="148" cy="480" r="4.2" fill="#8a8a8a"/>
<g fill="#b4b4b4"><circle cx="134.5" cy="487" r="0.9"/><circle cx="140.5" cy="487" r="0.9"/><circle cx="137.5" cy="490" r="0.9"/><circle cx="134.5" cy="493" r="0.9"/><circle cx="140.5" cy="493" r="0.9"/></g>
<!-- layers -->
<g fill="none" stroke="#b4b4b4" stroke-width="2.2" stroke-linejoin="round" stroke-linecap="round">
<path d="M131.9,525 L146.5,535 L131.9,545 L117.5,535 Z"/>
<path d="M121,539 L117.5,541.8 L131.9,552 L146.5,541.8 L143,539"/>
<path d="M121,546 L117.5,548.8 L131.9,559 L146.5,548.8 L143,546"/>
</g>
<!-- folder people -->
<path d="M114.5,612.5 Q114.5,610 117,610 H126 L129,614 H147 Q149.5,614 149.5,616.5 V639 Q149.5,641.5 147,641.5 H117 Q114.5,641.5 114.5,639 Z" fill="none" stroke="#b4b4b4" stroke-width="2"/>
<path d="M114.5,612.5 Q114.5,610 117,610 H126 L129,614 H114.5 Z" fill="#b4b4b4"/>
<circle cx="125" cy="623.5" r="3" fill="#b4b4b4"/>
<path d="M121.5,637.5 L123,628 H127 L128.5,637.5 Z" fill="#b4b4b4"/>
<circle cx="136" cy="622" r="3.4" fill="none" stroke="#b4b4b4" stroke-width="1.6"/>
<path d="M131.5,637.5 Q130.5,630 133,626.5 M140.5,637.5 Q141.5,630 139,626.5" fill="none" stroke="#b4b4b4" stroke-width="1.6"/>

<!-- toolbar -->
<g fill="#b8b8b8">
<rect x="205.5" y="108" width="29" height="4.2" rx="1.5"/>
<rect x="205.5" y="118" width="29" height="4.2" rx="1.5"/>
<rect x="205.5" y="128" width="29" height="4.2" rx="1.5"/>
</g>
<g fill="none" stroke="#b8b8b8" stroke-width="2.2" stroke-linecap="round" stroke-linejoin="round">
<!-- import -->
<path d="M302.8,111.2 H290.5 Q287.2,111.2 287.2,114.5 V131.3 Q287.2,134.6 290.5,134.6 H311.3 Q314.6,134.6 314.6,131.3 V121.2"/>
<path d="M295.8,120 A5.6,5.6 0 1 0 301.2,127.2" stroke-width="2.2"/>
<path d="M312.5,114.8 L300.8,126.2" stroke-width="3.6"/>
<!-- chevrons -->
<path d="M355.8,114 L365.8,104 L375.8,114 M355.8,126 L365.8,136 L375.8,126" stroke-width="2.8"/>
<path d="M747.8,114 L757.8,104 L767.8,114 M747.8,126 L757.8,136 L767.8,126" stroke-width="2.8"/>
<!-- clip -->
<rect x="411" y="102.8" width="34" height="34.5" rx="3.5"/>
<path d="M425.6,109.8 C419,112 414.5,116 414.8,122.5 C415,128 419,130.5 423.5,129.6 C428,128.8 434,126 438,123.5 C441.5,121 441.5,115.8 437.2,114.6 C433,113.5 427,116 424,118.5 C421,121 423.5,123.5 426,122.8 C429,122 431.5,120.8 433.5,119.6" stroke-width="3"/>
</g>
<path d="M302.8,112.9 C303,109 305.5,105 309.5,103 C313,101.6 318,101.6 321.8,102.2 C322.6,106 322.2,110.5 320.5,113.5 C319,116.5 316.5,118.5 313.8,119 C312.2,119.2 311.8,117.5 312.6,115.6 L312,114.5 C309.5,116 306.5,115.5 302.8,112.9 Z" fill="#b8b8b8"/>
<circle cx="440.6" cy="107.4" r="5.6" fill="#ae2148"/>
<!-- separators -->
<g fill="#7a7a7a"><rect x="478" y="92" width="2" height="58"/><rect x="786" y="92" width="2" height="58"/><rect x="970" y="92" width="2" height="58"/><rect x="1322" y="92" width="2" height="58"/><rect x="1590" y="92" width="2" height="58"/><rect x="1858" y="92" width="2" height="58"/></g>
<!-- new doc -->
<g fill="none" stroke="#b8b8b8" stroke-width="2.2" stroke-linejoin="round">
<path d="M540.6,122 V107 Q540.6,103.2 536.8,103.2 H521 Q517.2,103.2 517.2,107 V127.5 L525.8,135.3 H530"/>
</g>
<path d="M517.5,127.2 H522.2 Q525.8,127.8 525.8,131.5 V135.5 Z" fill="#b8b8b8"/>
<circle cx="541.2" cy="132.7" r="8.8" fill="url(#g4)" stroke="#b0b0b0" stroke-width="1.2"/>
<path d="M534.6,132.7 H547.8 M541.2,126.1 V139.3" stroke="#3a3a3a" stroke-width="1.9"/>
<!-- folder open -->
<g fill="none" stroke="#b8b8b8" stroke-width="2.2" stroke-linejoin="round">
<path d="M598,135 Q596.7,135 596.7,132 V109.5 Q596.7,105.6 600.5,105.6 H607.5 L611.5,109.3 H613"/>
<path d="M613.2,117.8 V114 Q613.2,109.6 617.6,109.6 H625"/>
</g>
<path d="M624.2,104.6 L630,109.4 L624.2,114.3 Z" fill="#b8b8b8"/>
<path d="M604,117.8 H631 Q632.3,117.8 632,119.2 L627.8,133 Q627.2,135.4 624.8,135.4 H598.5 L602.3,119.5 Q602.7,117.8 604,117.8 Z" fill="#b8b8b8"/>
<!-- tray -->
<path d="M697,102 V116" stroke="#b8b8b8" stroke-width="2.2"/>
<path d="M691.3,115.8 H702.7 L697,122 Z" fill="#b8b8b8"/>
<g fill="none" stroke="#b8b8b8" stroke-width="2.2" stroke-linejoin="round">
<path d="M692.4,108.8 H688.5 Q687.2,108.8 686.5,110.2 L679.5,126.6 M701.6,108.8 H705.5 Q706.8,108.8 707.5,110.2 L714.5,126.6"/>
<rect x="678.8" y="126.8" width="36.4" height="8.6" rx="4"/>
</g>
<rect x="681" y="129" width="32" height="4.2" rx="2" fill="#8c8c8c"/>
<!-- undo redo -->
<g fill="none" stroke="#6f6f6f" stroke-width="2.3" stroke-linecap="round">
<path d="M830,110.8 H840 A10.9,10.9 0 0 1 840,132.6 H822.5"/>
<path d="M926.2,110.8 H916.2 A10.9,10.9 0 0 0 916.2,132.6 H933.7"/>
</g>
<g fill="#6f6f6f"><path d="M820.5,110.8 L832,102.8 V118.8 Z"/><path d="M935.7,110.8 L924.2,102.8 V118.8 Z"/></g>
<!-- spinner -->
<g stroke="#c0c0c0" stroke-width="2.6" stroke-linecap="round">
<path d="M1022.7,109.5 L1024.5,102.8 M1027.8,112.6 L1032.6,107.8 M1030.1,117.3 L1036.8,115.5 M1030.1,122.7 L1036.8,124.5 M1027.8,127.4 L1032.6,132.2 M1022.7,130.5 L1024.5,137.2 M1017.3,130.5 L1015.5,137.2 M1012.2,127.4 L1007.4,132.2 M1009.9,122.7 L1003.2,124.5 M1009.9,117.3 L1003.2,115.5 M1012.2,112.6 L1007.4,107.8 M1017.3,109.5 L1015.5,102.8"/>
</g>
<!-- sel dashed -->
<rect x="1089" y="104.5" width="22.3" height="22.8" rx="1.5" fill="#555" stroke="#8c8c8c" stroke-width="2" stroke-dasharray="3.6 2.6"/>
<g stroke="#8c8c8c" stroke-width="2" stroke-linecap="round">
<path d="M1115,113.5 L1118.5,110.3 M1116.8,120 L1121.3,118.8 M1116.8,125.5 L1121.3,126.8 M1114.8,130.8 L1118,134 M1110.5,132.5 L1111.5,137 M1104.5,132.5 L1103.6,137 M1099.5,130.5 L1096.5,133.8"/>
</g>
<!-- bucket -->
<path d="M1186.2,104.5 Q1188,102.8 1189.8,104.5 L1205.6,120.2 Q1207.3,122 1205.6,123.8 L1193.5,135.7 Q1191.7,137.5 1189.9,135.7 L1175.2,121 Q1173.4,119.2 1175.2,117.4 Z" fill="#b8b8b8"/>
<path d="M1188,107.3 L1181.5,113.8 H1194.5 Z" fill="#4e4e4e"/>
<path d="M1176.5,117.5 Q1171.5,121 1172.5,127 Q1173.5,131.5 1176.5,130.5 Q1178.5,129.5 1178.2,125 Z" fill="#b8b8b8"/>
<!-- transform -->
<g fill="none" stroke="#b8b8b8" stroke-width="2"><rect x="1258.9" y="110.6" width="26.4" height="25"/><path d="M1272.1,102.5 V110.6"/></g>
<g fill="#b8b8b8"><circle cx="1258.9" cy="110.6" r="2.8"/><circle cx="1272.1" cy="110.6" r="2.8"/><circle cx="1285.3" cy="110.6" r="2.8"/><circle cx="1258.9" cy="123.1" r="2.8"/><circle cx="1285.3" cy="123.1" r="2.8"/><circle cx="1258.9" cy="135.6" r="2.8"/><circle cx="1272.1" cy="135.6" r="2.8"/><circle cx="1285.3" cy="135.6" r="2.8"/><circle cx="1272.1" cy="102.4" r="2.8"/></g>
<!-- dim selection icons -->
<g fill="none" stroke="#7c7c7c" stroke-width="2">
<rect x="1356.7" y="104.7" width="30.6" height="30.5" rx="3" stroke-dasharray="4 3"/>
<path d="M1354.7,102.6 L1389.3,137.2" stroke-width="1.8"/>
<path d="M1470,104.7 H1444 Q1440.7,104.7 1440.7,108 V133.7 L1469.3,105" stroke-dasharray="4 3"/>
<rect x="1524.8" y="104.7" width="30.5" height="30.5" rx="4"/>
<rect x="1528.4" y="108.6" width="23" height="22.6" rx="2" stroke-dasharray="3.5 2.6"/>
</g>
<path d="M1446.3,135.2 L1471.8,110.3 V133.2 Q1471.8,135.2 1469.8,135.2 Z" fill="#707070"/>
<!-- ruler icons -->
<g fill="none" stroke-width="2">
<path d="M1641.3,135 H1624.5 V105.9 L1639.8,122.7" stroke="#c8c8c8"/>
<path d="M1641.3,135 H1652.8 L1639.8,122.7" stroke="#8e96a8" stroke-width="1.4"/>
<path d="M1723.8,120.4 H1706.3 A17.2,17 0 0 0 1723.8,137.3" stroke="#c8c8c8"/>
<path d="M1723.8,120.4 H1740.8 A17.2,17 0 0 1 1723.8,137.3" stroke="#8e96a8" stroke-width="1.4"/>
<path d="M1790.3,120.4 H1825.4 M1790.3,132.7 H1825.4 M1796.4,108.2 V137.3 M1814.7,108.2 V137.3" stroke="#6e6e6e" stroke-width="1.6"/>
<path d="M1808.6,121.2 H1796.4 V132.7 H1825.4" stroke="#c8c8c8"/>
</g>
<g stroke="#b8b8b8" stroke-linecap="round">
<path d="M1643.5,116.5 L1656,104.3" stroke-width="4.6"/>
<path d="M1728.3,116.5 L1740.8,104.3" stroke-width="4.6"/>
<path d="M1812.3,116.5 L1824.8,104.3" stroke-width="4.6"/>
</g>
<g fill="#b8b8b8">
<path d="M1639.5,120 L1641,114 L1645.5,118.5 Z"/>
<path d="M1724.3,120 L1725.8,114 L1730.3,118.5 Z"/>
<path d="M1808.3,120 L1809.8,114 L1814.3,118.5 Z"/>
</g>
<!-- help -->
<path d="M1895,130.5 A15.3,15.3 0 1 1 1900,134.5 L1892.8,137 Z" fill="none" stroke="#b8b8b8" stroke-width="2.2" stroke-linejoin="round"/>
<path d="M1917.5,110 L1925,102.8 M1919,102.8 H1925 V108.8" fill="none" stroke="#b8b8b8" stroke-width="1.9"/>
<path d="M1902.5,116.5 Q1902.5,110.8 1908,110.8 Q1913.5,110.8 1913.5,116 Q1913.5,119 1910,121 Q1908,122.3 1908,125" fill="none" stroke="#b8b8b8" stroke-width="3.4" stroke-linecap="round"/>
<circle cx="1908" cy="129.3" r="2.2" fill="#b8b8b8"/>
<!-- tab chevron -->
<path d="M2122,165 L2133,176.5 L2144,165" fill="none" stroke="#d0d0d0" stroke-width="2.6"/>

<!-- tool panel header -->
<g stroke="#6a6a6a" stroke-width="2"><path d="M1682,453 H1700 M1682,459 H1700 M1682,465 H1700"/></g>
<path d="M1714.2,453 L1727.8,466 M1727.8,453 L1714.2,466" stroke="#bdbdbd" stroke-width="2"/>
<path d="M1742,465.3 H1760" stroke="#bdbdbd" stroke-width="2"/>

<!-- tool icons -->
<g fill="none" stroke="#b4b4b4" stroke-width="2.2">
<circle cx="1712" cy="510" r="13.8"/>
<path d="M1721.8,521 L1731,529.8" stroke-width="3.8"/>
<!-- cube -->
<path d="M1710,564 L1722.2,570 V582 M1710,564 L1697.8,570 V584 L1710,590 L1714.5,587.5 M1697.8,570 L1710,576 L1722.2,570 M1710,576 V590 M1697.8,584 L1710,578 L1714.5,580" stroke-width="1.9" stroke-linejoin="round"/>
<!-- dashed rect -->
<rect x="1699.5" y="633" width="31.5" height="31.5" rx="2" stroke-dasharray="4.2 3" stroke-width="2.3"/>
<!-- wand -->
<path d="M1765.5,666 L1784,647.5" stroke-width="2"/>
<!-- eyedropper -->
<path d="M1697.5,734.3 L1700.5,725 L1717,708.5 L1723,714.5 L1706.5,731 Z" stroke-width="1.9" stroke-linejoin="round"/>
<!-- frame -->
<rect x="1767" y="1129.5" width="32" height="31.3" rx="4" stroke-width="2"/>
<path d="M1767,1138.4 H1799 M1767,1151 H1799 M1787,1138.4 L1782.4,1160.8" stroke-width="2"/>
<!-- line -->
<path d="M1697.5,1162 L1732.5,1127.5" stroke-width="2"/>
<!-- speech -->
<path d="M1703.5,1290.5 A17.6,13.5 0 1 1 1712,1292.4 Q1706,1296.5 1699.5,1296.5 Q1703,1294 1703.5,1290.5 Z" stroke-width="2" stroke-linejoin="round"/>
<!-- correction -->
<path d="M1774.4,1267.9 H1798.9 M1769.9,1272 V1296" stroke-width="2"/>
</g>
<g fill="#b4b4b4">
<!-- hand -->
<path d="M1773.5,528.5 C1771,524 1768,517 1766.5,514 C1765.5,511.5 1768,510 1770,511.5 L1774.5,515.5 L1774,501 C1773.8,498.5 1777,498 1777.5,500.5 L1779.5,510 L1780.8,498 C1781,495.5 1784.5,495.5 1784.5,498 L1785,510 L1787.5,500 C1788,497.8 1791,498.2 1790.8,500.8 L1789.5,511.5 L1793.5,504.5 C1794.5,502.5 1797.5,503.5 1796.8,505.8 L1791.5,521 C1790,526.5 1788,529.2 1784.5,529.2 H1779 C1776.5,529.2 1774.8,529 1773.5,528.5 Z"/>
<!-- move arrows -->
<path d="M1783,562.2 L1789.7,570 H1776.3 Z M1783,600 L1789.7,592 H1776.3 Z M1764.1,581.1 L1771.9,574.4 V587.8 Z M1801.9,581.1 L1794.1,574.4 V587.8 Z"/>
<rect x="1781.8" y="569" width="2.4" height="24"/><rect x="1771" y="579.9" width="24" height="2.4"/>
<!-- cursor -->
<path d="M1717,579.6 L1733.3,588.1 L1727,589.6 L1730.4,598.1 L1726.7,599.6 L1723.3,591.5 L1717,596.7 Z"/>
<!-- wand star -->
<path d="M1787.5,630.5 L1789.2,641 L1797.5,635 L1791.5,643.2 L1802,644.9 L1791.5,646.6 L1797.5,654.8 L1789.2,648.8 L1787.5,659.3 L1785.8,648.8 L1777.5,654.8 L1783.5,646.6 L1773,644.9 L1783.5,643.2 L1777.5,635 L1785.8,641 Z"/>
<!-- eyedropper top -->
<path d="M1717,705.5 L1726,714.5 L1729.5,711 L1726.5,708 L1730.5,704 Q1733,700 1729.5,699.5 Q1727.5,698 1724,701.5 L1720.5,705 L1719.5,704 Z"/>
<path d="M1699,727.5 L1703,731.5 L1697.5,734.3 Z" fill="#8a8a8a"/>
</g>
<!-- selected pen box -->
<rect x="1683" y="763.4" width="64" height="64" fill="#5f6a82" stroke="#1e1e1e" stroke-width="2.2"/>
<g fill="#b4b4b4">
<path d="M1716,784 L1722.5,776.2 L1734.5,788.6 L1727,795 L1724,795 L1716,787 Z"/>
</g>
<g fill="none" stroke="#b4b4b4" stroke-width="1.9" stroke-linejoin="round">
<path d="M1717.5,786.5 L1708,792.5 Q1705.5,794.5 1704.5,797.5 L1697.5,813 L1713,806.5 Q1716,805.5 1718,803 L1724.5,794"/>
</g>
<path d="M1699.5,811 L1710,800.5" stroke="#b4b4b4" stroke-width="1.6"/>
<path d="M1709.5,801 L1715,795.5" stroke="#b4b4b4" stroke-width="3" stroke-linecap="round"/>
<!-- pencil -->
<path d="M1764.8,812.8 L1777.2,788.2 Q1778.6,785.6 1780.8,783.8 L1789.3,776.2 L1802.2,788.6 L1793.2,797.8 Q1791,800.2 1788.3,801.6 Z M1772.3,804.6 L1779.6,789.8 Q1781.2,786.6 1783.8,785.8 Q1785.2,788.8 1785.7,791.3 Q1789.2,792.3 1791.4,795.3 Q1791.5,798 1788.6,799.6 Z" fill="#b4b4b4" fill-rule="evenodd"/>
<!-- brush -->
<path d="M1722,846 L1733,857 L1727.5,862.5 L1724.5,862 L1716.5,854 L1716.5,851 Z" fill="#b4b4b4"/>
<path d="M1717,853.5 C1711,853.5 1706,858 1704.5,864 C1703,870 1702,875.5 1697,881 C1706,881.5 1714,878 1719.5,872 C1723.5,867.5 1725,863.5 1724.5,862" fill="none" stroke="#b4b4b4" stroke-width="1.9"/>
<path d="M1697,881 C1703,876 1705,870.5 1707,867 L1710,869.5 L1712.5,865.5 L1715.5,868 C1712,874 1706,879 1697,881 Z" fill="#b4b4b4"/>
<!-- spray -->
<g fill="#b4b4b4">
<circle cx="1766.5" cy="844.5" r="1.4"/><circle cx="1771.5" cy="847" r="1.4"/><circle cx="1766.5" cy="849.5" r="1.4"/><circle cx="1776.5" cy="850" r="1.4"/><circle cx="1771.5" cy="852.5" r="1.4"/><circle cx="1766.5" cy="855" r="1.4"/><circle cx="1781.5" cy="853.3" r="1.4"/><circle cx="1776.5" cy="856" r="1.4"/><circle cx="1771.5" cy="858" r="1.4"/><circle cx="1766.5" cy="861" r="1.4"/><circle cx="1771.5" cy="863.5" r="1.4"/><circle cx="1766.5" cy="866.5" r="1.4"/>
<rect x="1784.2" y="850" width="5" height="8" rx="1.5"/>
<path d="M1775.5,871 Q1776,860.5 1786.7,860.5 Q1797.5,860.5 1798,871 Z"/>
</g>
<rect x="1776" y="871" width="21.8" height="9.5" rx="2" fill="none" stroke="#b4b4b4" stroke-width="1.9"/>
<!-- sparkle -->
<g fill="#b4b4b4">
<path d="M1712,913 Q1713.2,926.6 1726.9,927.8 Q1713.2,929 1712,942.6 Q1710.8,929 1697.2,927.8 Q1710.8,926.6 1712,913 Z"/>
<path d="M1725.9,934.5 Q1726.6,941 1733,941.7 Q1726.6,942.4 1725.9,949 Q1725.2,942.4 1718.8,941.7 Q1725.2,941 1725.9,934.5 Z"/>
</g>
<!-- eraser -->
<path d="M1784.8,913.3 L1800.9,928.7 L1787,942.2 L1770.8,926.5 Z" fill="#b4b4b4"/>
<path d="M1770.8,926.5 L1765.5,932 Q1764,933.8 1765.5,935.5 L1777.5,947.5 Q1779,948.5 1780.5,947.5 L1787,942.2 M1779.5,948.2 H1798" fill="none" stroke="#b4b4b4" stroke-width="1.9"/>
<!-- blend drops -->
<path d="M1706.5,983.5 C1703,990 1697,996.5 1697,1004 C1697,1010.5 1701.5,1014.8 1706,1014.8 C1710,1014.8 1713,1012.5 1714.8,1009.5 C1716.5,1012.5 1719.5,1014.8 1723.5,1014.8 C1728,1014.8 1732.6,1010.5 1732.6,1004 C1732.6,996.5 1726.5,990 1723.1,983.5 C1720.5,989 1716.5,993.5 1714.8,996.5 C1713,993.5 1709,989 1706.5,983.5 Z" fill="url(#g3)" stroke="#b8b8b8" stroke-width="1.8"/>
<!-- separators in panel -->
<g fill="#6a6a6a"><rect x="1684" y="756" width="134" height="2"/><rect x="1684" y="1038" width="134" height="2"/></g>
<!-- bucket tool -->
<path d="M1713.2,1061.5 Q1715,1059.7 1716.8,1061.5 L1732.7,1076.2 Q1734.5,1078 1732.7,1079.8 L1718,1092.6 Q1716.2,1094.4 1714.4,1092.6 L1698.6,1078.6 Q1696.8,1076.8 1698.6,1075 Z" fill="#b4b4b4"/>
<path d="M1715,1064.3 L1708.5,1070.8 H1721.5 Z" fill="#3f3f3f"/>
<path d="M1699.5,1075.5 Q1695,1079 1696,1085.5 Q1697,1089.5 1700,1088.5 Q1702,1087.5 1701.5,1083 Z" fill="#b4b4b4"/>
<!-- gradient square -->
<rect x="1767.5" y="1061.8" width="31" height="30.7" rx="3" fill="url(#g2)" stroke="#b4b4b4" stroke-width="2"/>
<!-- triangle ruler -->
<path d="M1699,1196.7 H1733.3 L1699,1231.4 Z M1705.5,1203 V1216.5 L1719,1203 Z" fill="#b4b4b4" fill-rule="evenodd"/>
<!-- A -->
<path d="M1767.6,1231.4 L1780.2,1194.4 H1784.8 L1798.9,1231.4 H1794.2 L1790.6,1221.5 H1776 L1772.4,1231.4 Z M1777.4,1217.5 H1789.2 L1783.3,1200.5 Z" fill="#b4b4b4" fill-rule="evenodd"/>
<!-- correction -->
<rect x="1765.3" y="1262.9" width="9.2" height="9.2" rx="1.5" fill="#b4b4b4"/>
<path d="M1776.3,1274.3 L1799.5,1283.4 L1789.5,1286.5 L1785.8,1297 Z" fill="#b4b4b4"/>
<!-- color swatches -->
<rect x="1678.3" y="1322" width="39.3" height="55.3" rx="8" fill="none" stroke="#7b90c0" stroke-width="4"/>
<rect x="1682" y="1325.7" width="32.4" height="47.9" rx="4" fill="#000" stroke="#3a3a3a" stroke-width="1.5"/>
<rect x="1727.5" y="1322" width="44.8" height="56.3" rx="8" fill="none" stroke="#6a6a6a" stroke-width="2"/>
<rect x="1732.6" y="1326.3" width="34.5" height="46.7" rx="3" fill="#fff"/>
<rect x="1781.1" y="1322" width="41.4" height="56.3" rx="8" fill="none" stroke="#6a6a6a" stroke-width="2"/>
<rect x="1787" y="1327" width="30" height="46.2" rx="4" fill="url(#chk)"/>
</svg>

</body></html>
